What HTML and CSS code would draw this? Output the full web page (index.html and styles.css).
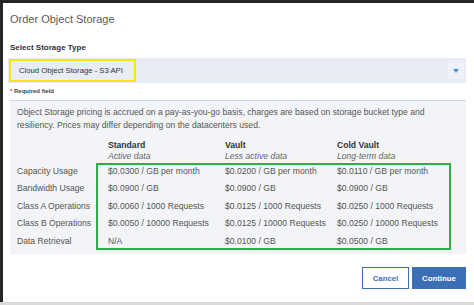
FILE: index.html
```html
<!DOCTYPE html>
<html>
<head>
<meta charset="utf-8">
<link rel="stylesheet" href="styles.css">
</head>
<body>
<div class="modal">
  <h1 class="title">Order Object Storage</h1>
  <div class="field-label">Select Storage Type</div>
  <div class="select">
    <span class="select-value">Cloud Object Storage - S3 API</span>
    <span class="arrow-box"><svg class="arrow" width="6" height="4" viewBox="0 0 6 4"><path d="M0 0 L6 0 L3 4 Z" fill="#4a8fd8"/></svg></span>
  </div>
  <div class="required"><span class="star">*</span> Required field</div>
  <div class="info">
    <p class="desc">Object Storage pricing is accrued on a pay-as-you-go basis, charges are based on storage bucket type and resiliency. Prices may differ depending on the datacenters used.</p>
    <div class="table">
      <div class="head-spacer"></div>
      <div class="heads">
        <div class="head"><b>Standard</b><i>Active data</i></div>
        <div class="head"><b>Vault</b><i>Less active data</i></div>
        <div class="head"><b>Cold Vault</b><i>Long-term data</i></div>
      </div>
      <div class="labels">
        <div class="cell">Capacity Usage</div>
        <div class="cell">Bandwidth Usage</div>
        <div class="cell">Class A Operations</div>
        <div class="cell">Class B Operations</div>
        <div class="cell">Data Retrieval</div>
      </div>
      <div class="values">
        <div class="cell">$0.0300 / GB per month</div><div class="cell">$0.0200 / GB per month</div><div class="cell">$0.0110 / GB per month</div>
        <div class="cell">$0.0900 / GB</div><div class="cell">$0.0900 / GB</div><div class="cell">$0.0900 / GB</div>
        <div class="cell">$0.0060 / 1000 Requests</div><div class="cell">$0.0125 / 1000 Requests</div><div class="cell">$0.0250 / 1000 Requests</div>
        <div class="cell">$0.0050 / 10000 Requests</div><div class="cell">$0.0125 / 10000 Requests</div><div class="cell">$0.0250 / 10000 Requests</div>
        <div class="cell">N/A</div><div class="cell">$0.0100 / GB</div><div class="cell">$0.0500 / GB</div>
      </div>
    </div>
  </div>
  <div class="actions">
    <button class="btn cancel">Cancel</button>
    <button class="btn continue">Continue</button>
  </div>
</div>
<div class="bottom-strip"></div>
</body>
</html>
```
FILE: styles.css
```css
html, body {
  margin: 0;
  padding: 0;
}
body {
  background: #262626;
  width: 474px;
  height: 305px;
  overflow: hidden;
  font-family: "Liberation Sans", Arial, sans-serif;
  color: #555;
}
.modal {
  margin: 3px 0 0 3px;
  height: 299px;
  box-sizing: border-box;
  background: #fff;
  padding: 9px 8px 0 7px;
  display: flex;
  flex-direction: column;
}
.bottom-strip {
  height: 3px;
  background: #d9d9d9;
}
.title {
  margin: 0;
  font-size: 11px;
  line-height: 14px;
  font-weight: normal;
  color: #5a5a5a;
}
.field-label {
  margin-top: 15.5px;
  font-size: 8px;
  line-height: 11px;
  font-weight: bold;
  color: #333;
}
.select {
  margin-top: 5.5px;
  margin-left: -2px;
  height: 25px;
  background: #e8ecf4;
  display: flex;
  align-items: center;
  justify-content: space-between;
  padding: 0 2px 0 1px;
}
.select-value {
  height: 23px;
  line-height: 23px;
  padding: 0 13px 0 10px;
  font-size: 7.7px;
  color: #333;
  box-shadow: inset 0 0 0 2px #f3ea07;
}
.arrow-box {
  width: 16px;
  height: 16px;
  background: #eef2f8;
  display: flex;
  align-items: center;
  justify-content: center;
}
.arrow {
  display: block;
}
.required {
  margin-top: 4px;
  font-size: 6px;
  line-height: 8px;
  font-weight: bold;
  color: #444;
}
.star {
  color: #d83a3a;
}
.info {
  margin-top: 5px;
  background: #f2f4f7;
  border-top: 1px solid #cad6e8;
  padding: 5px 10px 4px 7px;
}
.desc {
  margin: 0;
  font-size: 8.6px;
  line-height: 13px;
  color: #555;
}
.table {
  margin-top: 7.5px;
  display: grid;
  grid-template-columns: 79px 355px;
}
.heads, .values {
  display: grid;
  grid-template-columns: 117px 112px 1fr;
  padding-left: 12px;
}
.head {
  display: flex;
  flex-direction: column;
  font-size: 8.6px;
  line-height: 11px;
}
.head b {
  color: #333;
}
.head i {
  color: #666;
}
.labels, .values {
  margin-top: 1px;
}
.values {
  box-shadow: inset 0 0 0 2px #2eae4a;
}
.cell {
  height: 17.5px;
  line-height: 17.5px;
  font-size: 8.6px;
  white-space: nowrap;
  color: #555;
}
.actions {
  margin-top: 13px;
  display: flex;
  justify-content: flex-end;
  gap: 3px;
}
.btn {
  height: 22px;
  font-family: "Liberation Sans", Arial, sans-serif;
  font-size: 7.8px;
  font-weight: bold;
  padding: 0;
  box-sizing: border-box;
  cursor: pointer;
}
.cancel {
  width: 47px;
  background: #fff;
  border: 1px solid #3c6fb6;
  color: #3c6fb6;
}
.continue {
  width: 54px;
  background: #3b6eb5;
  border: 1px solid #3b6eb5;
  color: #fff;
}
```
